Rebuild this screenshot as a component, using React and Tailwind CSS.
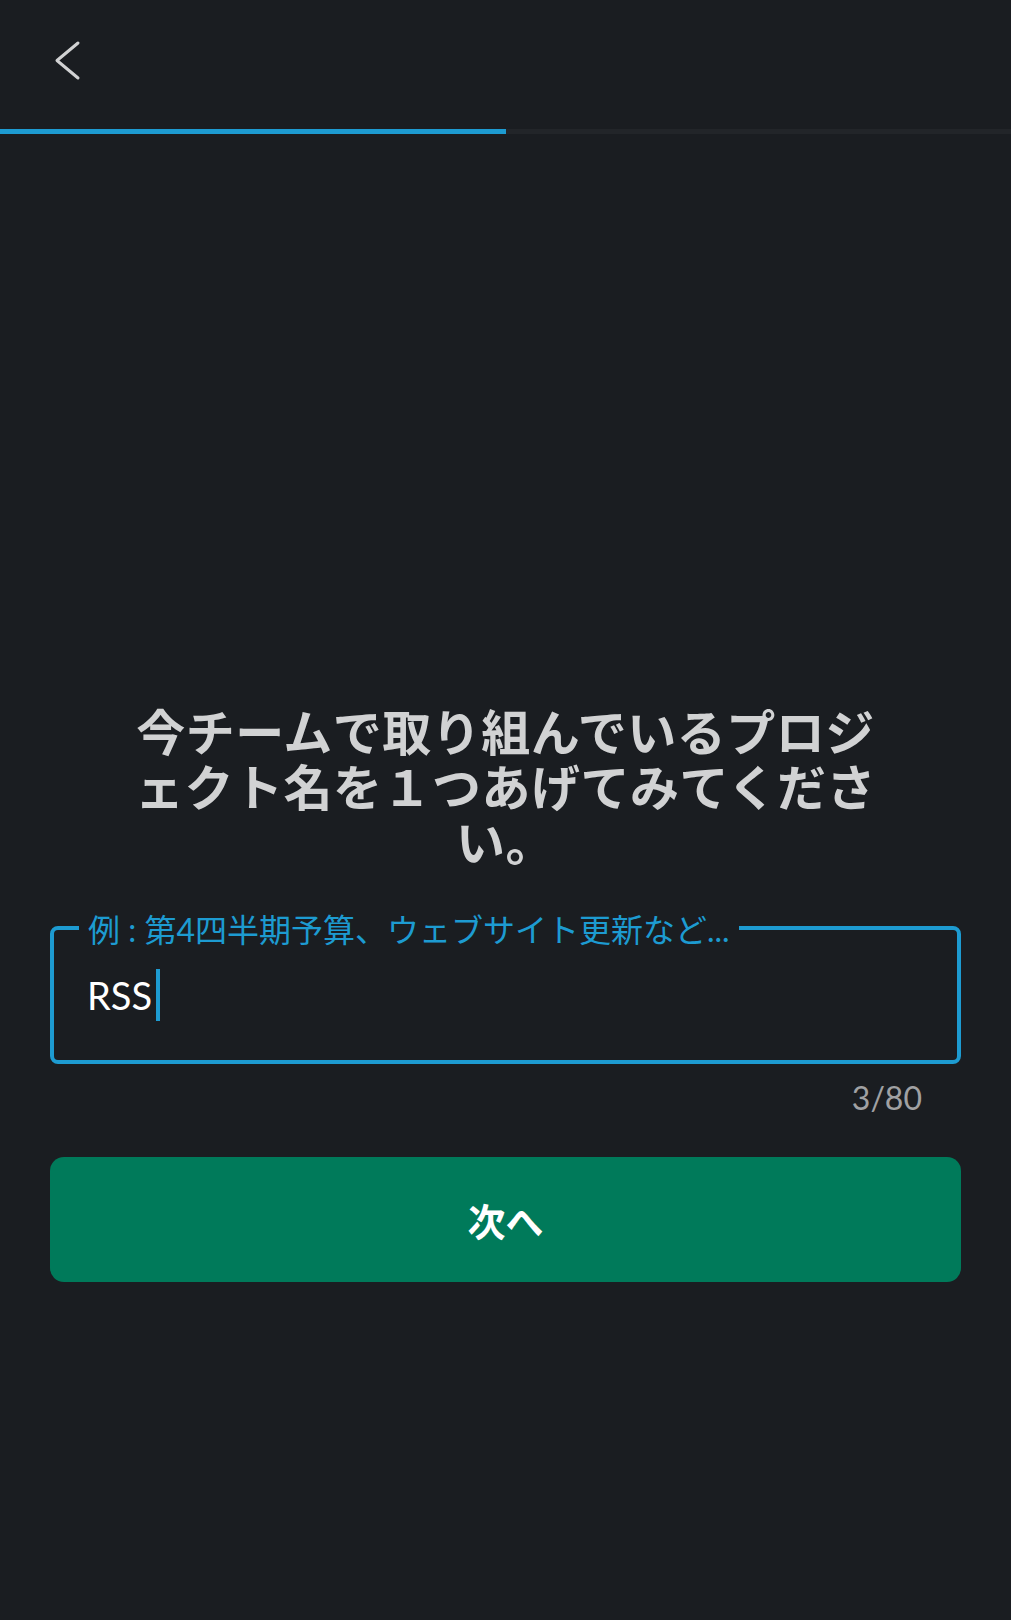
import React from "react";

export default function App() {
  return (
    <div className="w-full h-[1620px] bg-[#1a1d21] overflow-hidden" style={{ fontFamily: "Lato, 'Noto Sans CJK JP', sans-serif" }}>
      <div className="h-[129px] flex items-start">
        <button className="ml-[54px] mt-[40px] w-[28px] h-[42px] flex items-center justify-center">
          <svg width="28" height="42" viewBox="0 0 28 42">
            <polyline points="24,3 3,20.5 24,38" fill="none" stroke="#d1d2d3" strokeWidth="3" strokeLinecap="round" strokeLinejoin="round" />
          </svg>
        </button>
      </div>
      <div className="h-[5px] flex">
        <div className="w-1/2 bg-[#1d9bd1]" />
        <div className="flex-1 bg-[#222529]" />
      </div>

      <div className="pt-[568px] flex flex-col items-center">
        <h1
          className="w-[790px] text-center text-[49px] leading-[55px] font-bold tracking-[0.5px] text-[#d1d2d3]"
          style={{ fontFamily: "'Noto Sans CJK JP', sans-serif" }}
        >
          今チームで取り組んでいるプロジ<br />ェクト名を１つあげてみてくださ<br />い。
        </h1>
      </div>

      <div className="px-[50px] mt-[59px]">
        <div className="relative h-[138px] border-[4px] border-[#1d9bd1] rounded-[8px] flex items-center pl-[33px]">
          <span className="absolute left-[25px] -top-[19px] px-[9px] bg-[#1a1d21] text-[32px] leading-[38px] text-[#1d9bd1] whitespace-nowrap">
            例 : 第4四半期予算、ウェブサイト更新など...
          </span>
          <span className="text-[38px] text-white leading-none">RSS</span>
          <span className="ml-[4px] w-[4px] h-[52px] bg-[#1d9bd1]" />
        </div>
        <div className="flex justify-end pr-[39px] mt-[15px]">
          <span className="text-[32px] leading-[38px] text-[#a0a1a3]">3/80</span>
        </div>
        <button className="mt-[40px] w-full h-[125px] rounded-[14px] bg-[#007a5a] flex items-center justify-center">
          <span className="text-[38px] font-bold text-white" style={{ fontFamily: "'Noto Sans CJK JP', sans-serif" }}>次へ</span>
        </button>
      </div>
    </div>
  );
}
